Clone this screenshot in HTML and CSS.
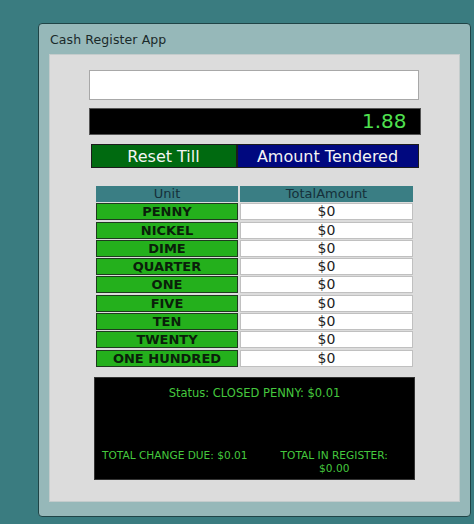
FILE: index.html
```html
<!DOCTYPE html>
<html>
<head>
<meta charset="utf-8">
<link rel="stylesheet" href="styles.css">
</head>
<body>
<div class="window">
  <div class="title">Cash Register App</div>
  <div class="panel">
    <input class="cash-input" type="text">
    <div class="display">1.88</div>
    <div class="buttons">
      <button class="btn reset">Reset Till</button>
      <button class="btn tender">Amount Tendered</button>
    </div>
    <div class="drawer">
      <div class="head">Unit</div><div class="head">TotalAmount</div>
      <div class="unit">PENNY</div><div class="amt">$0</div>
      <div class="unit">NICKEL</div><div class="amt">$0</div>
      <div class="unit">DIME</div><div class="amt">$0</div>
      <div class="unit">QUARTER</div><div class="amt">$0</div>
      <div class="unit">ONE</div><div class="amt">$0</div>
      <div class="unit">FIVE</div><div class="amt">$0</div>
      <div class="unit">TEN</div><div class="amt">$0</div>
      <div class="unit">TWENTY</div><div class="amt">$0</div>
      <div class="unit">ONE HUNDRED</div><div class="amt">$0</div>
    </div>
    <div class="status">
      <div class="status-line">Status: CLOSED PENNY: $0.01</div>
      <div class="totals">
        <div class="total">TOTAL CHANGE DUE: $0.01</div>
        <div class="total"><span class="line">TOTAL IN REGISTER:</span><span class="line">$0.00</span></div>
      </div>
    </div>
  </div>
</div>
</body>
</html>
```

FILE: styles.css
```css
html, body {
  margin: 0;
  padding: 0;
}
body {
  background: #3a7c80;
  font-family: "DejaVu Sans", Verdana, sans-serif;
  width: 474px;
  height: 524px;
  overflow: hidden;
}
.window {
  margin: 23px 0 0 38px;
  width: 433px;
  height: 494px;
  background: #96b8b9;
  border: 1px solid #1f4446;
  border-radius: 4px;
  padding: 0 10px 0 10px;
  box-sizing: border-box;
  display: flex;
  flex-direction: column;
}
.title {
  font-size: 12.5px;
  color: #1a2a2a;
  letter-spacing: 0.1px;
  height: 30px;
  line-height: 31px;
  padding-left: 1px;
}
.panel {
  width: 411px;
  height: 448px;
  background: #dcdcdc;
  border: 1px solid #c4cccc;
  box-sizing: border-box;
  display: flex;
  flex-direction: column;
  align-items: center;
  padding-top: 15px;
}
.cash-input {
  width: 330px;
  height: 30px;
  box-sizing: border-box;
  border: 1px solid #a8a8a8;
  background: #fff;
  margin: 0;
  margin-left: -1px;
}
.display {
  margin-top: 8px;
  width: 332px;
  height: 27px;
  box-sizing: border-box;
  background: #000;
  border: 1px solid #555;
  color: #4fe04f;
  font-size: 20px;
  line-height: 25px;
  text-align: right;
  padding-right: 13px;
}
.buttons {
  margin-top: 9px;
  width: 328px;
  display: flex;
}
.btn {
  height: 24px;
  border: 1px solid #1c1c1c;
  font-family: "DejaVu Sans", Verdana, sans-serif;
  font-size: 16px;
  color: #f4f4f4;
  padding: 0;
  margin: 0;
  line-height: 21px;
}
.reset {
  width: 146px;
  background: #006a10;
}
.tender {
  flex: 1;
  background: #00087f;
}
.drawer {
  margin-top: 18px;
  width: 317px;
  display: grid;
  grid-template-columns: 142px 173px;
  column-gap: 2px;
  row-gap: 1.3px;
}
.head {
  background: #3a7e84;
  color: #15303a;
  font-size: 13px;
  height: 16px;
  line-height: 16px;
  text-align: center;
}
.unit {
  background: #24b01c;
  border: 1px solid #1e3b1e;
  color: #0a200a;
  font-weight: bold;
  font-size: 13px;
  height: 17px;
  line-height: 15px;
  text-align: center;
  box-sizing: border-box;
}
.amt {
  background: #fff;
  border: 1px solid #c0c0c0;
  color: #222;
  font-size: 14px;
  height: 17px;
  line-height: 15px;
  text-align: center;
  box-sizing: border-box;
}
.status {
  margin-top: 10px;
  width: 321px;
  height: 103px;
  background: #000;
  border: 1px solid #333;
  box-sizing: border-box;
  color: #45c83e;
  font-size: 11.5px;
  display: flex;
  flex-direction: column;
  justify-content: space-between;
  padding: 8px 0 4px 0;
}
.status-line {
  text-align: center;
}
.totals {
  display: flex;
}
.total {
  flex: 1;
  text-align: center;
  font-size: 10.6px;
  line-height: 13px;
}
.line {
  display: block;
}
```
